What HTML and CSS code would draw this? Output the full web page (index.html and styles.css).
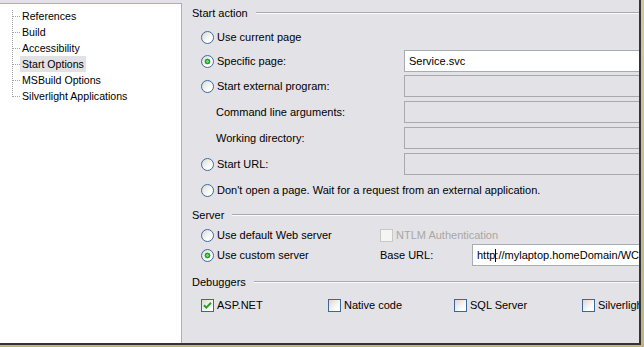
FILE: index.html
```html
<!DOCTYPE html>
<html>
<head>
<meta charset="utf-8">
<link rel="stylesheet" href="styles.css">
</head>
<body>
<div class="frame">
  <div class="window">
    <aside class="nav">
      <ul class="tree">
        <li><span class="twig"></span><span class="item">References</span></li>
        <li><span class="twig"></span><span class="item">Build</span></li>
        <li><span class="twig"></span><span class="item">Accessibility</span></li>
        <li><span class="twig"></span><span class="item selected">Start Options</span></li>
        <li><span class="twig"></span><span class="item">MSBuild Options</span></li>
        <li><span class="twig"></span><span class="item">Silverlight Applications</span></li>
      </ul>
    </aside>
    <main class="pane">
      <section class="group start">
        <div class="group-head"><span>Start action</span><span class="rule"></span></div>
        <div class="row r1"><label class="opt"><span class="radio"></span>Use current page</label></div>
        <div class="row r2"><label class="opt"><span class="radio on"></span>Specific page:</label><div class="field active">Service.svc</div></div>
        <div class="row r3"><label class="opt"><span class="radio"></span>Start external program:</label><div class="field"></div></div>
        <div class="row r4"><label class="sub">Command line arguments:</label><div class="field"></div></div>
        <div class="row r4"><label class="sub">Working directory:</label><div class="field"></div></div>
        <div class="row r4"><label class="opt"><span class="radio"></span>Start URL:</label><div class="field"></div></div>
        <div class="row r4"><label class="opt"><span class="radio"></span>Don't open a page. Wait for a request from an external application.</label></div>
      </section>
      <section class="group server">
        <div class="group-head"><span>Server</span><span class="rule"></span></div>
        <div class="srow s1">
          <label class="opt"><span class="radio"></span>Use default Web server</label>
          <label class="opt disabled"><span class="check off"></span>NTLM Authentication</label>
        </div>
        <div class="srow s2">
          <label class="opt"><span class="radio on"></span>Use custom server</label>
          <label class="plain">Base URL:</label>
          <div class="field active url">http<span class="caret"></span>://mylaptop.homeDomain/WCF</div>
        </div>
      </section>
      <section class="group debuggers">
        <div class="group-head"><span>Debuggers</span><span class="rule"></span></div>
        <div class="crow">
          <label class="opt"><span class="check"><svg viewBox="0 0 11 11" width="11" height="11"><path d="M2 5.2 L4.3 7.6 L9 2.8" fill="none" stroke="#22a322" stroke-width="2"/></svg></span>ASP.NET</label>
          <label class="opt"><span class="check"></span>Native code</label>
          <label class="opt"><span class="check"></span>SQL Server</label>
          <label class="opt"><span class="check"></span>Silverlight</label>
        </div>
      </section>
    </main>
  </div>
</div>
</body>
</html>
```

FILE: styles.css
```css
* { box-sizing: border-box; }
html, body { margin: 0; padding: 0; }
body {
  width: 644px;
  height: 347px;
  overflow: hidden;
  font-family: "Liberation Sans", Arial, sans-serif;
  font-size: 11px;
  color: #000;
  background: #cbbd8e;
}
.frame {
  width: 644px;
  height: 347px;
  padding: 0 3px 2px 0;
  background: linear-gradient(to bottom, #d4c79b, #c2b383);
}
.window {
  display: flex;
  width: 641px;
  height: 345px;
  border-right: 2px solid #343434;
  border-bottom: 2px solid #343434;
  overflow: hidden;
  background: #e3e2e7;
}
.nav {
  width: 182px;
  flex: none;
  margin-top: 3px;
  background: #fff;
  border-top: 1px solid #9fb1cc;
  border-right: 1px solid #9fb1cc;
}
.tree {
  list-style: none;
  margin: 0;
  padding: 4px 0 0 0;
  font-size: 10.6px;
  background: repeating-linear-gradient(to bottom, #a3a3a3 0 1px, transparent 1px 2px) no-repeat 12px 6px / 1px 87px;
}
.tree li {
  display: flex;
  align-items: center;
  height: 16px;
  padding-left: 13px;
}
.twig {
  width: 7px;
  height: 1px;
  flex: none;
  background: repeating-linear-gradient(to right, #a3a3a3 0 1px, transparent 1px 2px);
}
.item {
  padding: 0 2px;
  line-height: 16px;
  white-space: nowrap;
}
.item.selected { background: #e2e2e4; }

.pane {
  flex: 1;
  background: #e3e2e7;
  padding-left: 10px;
  overflow: hidden;
}
.group { display: flex; flex-direction: column; }
.group.start { padding-top: 6px; }
.group-head {
  display: flex;
  align-items: center;
  gap: 8px;
  height: 14px;
  white-space: nowrap;
}
.rule {
  flex: 1;
  height: 2px;
  border-top: 1px solid #a9a8ad;
  border-bottom: 1px solid #fbfbfc;
}
.row {
  display: grid;
  grid-template-columns: 212px 1fr;
  align-items: center;
  height: 22px;
  white-space: nowrap;
}
.r1 { margin-top: 6px; }
.r2 { margin-top: 2px; }
.r3 { margin-top: 3px; }
.r4 { margin-top: 4px; }
.opt {
  display: flex;
  align-items: center;
  gap: 3px;
  padding-left: 9px;
  white-space: nowrap;
}
.sub { padding-left: 24px; }
.radio {
  width: 13px;
  height: 13px;
  flex: none;
  border-radius: 50%;
  border: 1px solid #3f6c9a;
  background: linear-gradient(135deg, #d9d8d2, #ffffff 70%);
}
.radio.on {
  background:
    radial-gradient(circle at 50% 50%, #73d873 0 1px, #23a223 1.6px 2.6px, transparent 3.2px),
    linear-gradient(135deg, #d9d8d2, #ffffff 70%);
}
.check {
  width: 13px;
  height: 13px;
  flex: none;
  border: 1px solid #3d669a;
  background: linear-gradient(135deg, #d9d8d2, #ffffff 75%);
  display: flex;
  align-items: center;
  justify-content: center;
}
.check svg { display: block; }
.check.off {
  border-color: #c9c8c2;
  background: #f5f5f3;
}
.field {
  height: 22px;
  width: calc(100% + 20px);
  border: 1px solid #a9a8ad;
  padding-left: 4px;
  display: flex;
  align-items: center;
  white-space: nowrap;
  overflow: hidden;
}
.field.active { background: #fff; border-color: #a7acb4; }

.group.server .group-head { margin-top: 7px; }
.srow {
  display: grid;
  grid-template-columns: 188px 92px 1fr;
  align-items: center;
  white-space: nowrap;
}
.s1 { height: 18px; margin-top: 4px; }
.s2 { height: 22px; }
.disabled { color: #a8a7a4; padding-left: 0; }
.plain { padding-left: 0; }
.url { width: calc(100% + 20px); }
.caret {
  display: inline-block;
  width: 1px;
  height: 13px;
  background: #000;
  margin: 0 -1px 0 0;
}

.group.debuggers .group-head { margin-top: 9px; }
.crow {
  display: grid;
  grid-template-columns: 127px 126px 128px 127px;
  align-items: center;
  height: 22px;
  margin-top: 5px;
  white-space: nowrap;
}
.crow .opt { gap: 3px; }
```
